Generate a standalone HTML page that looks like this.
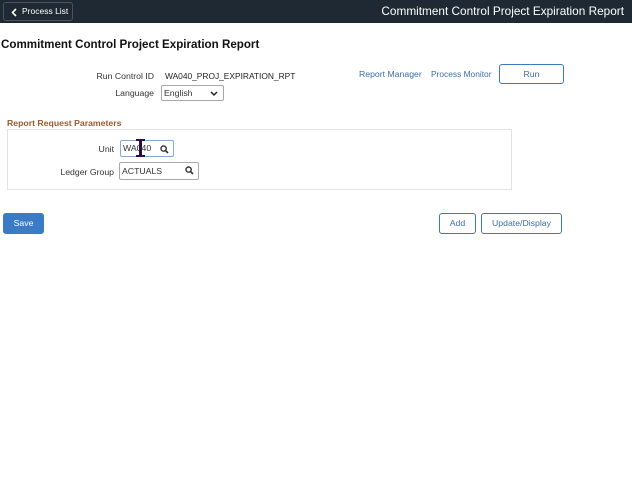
<!DOCTYPE html>
<html><head><style>
*{margin:0;padding:0;box-sizing:border-box}
body{width:632px;height:488px;background:#fff;font-family:"Liberation Sans",Arial,sans-serif;position:relative;overflow:hidden;color:#333}
.hdr{position:absolute;left:0;top:0;width:632px;height:23px;background:#1f2933}
.pl{position:absolute;left:3px;top:2px;width:70px;height:19px;border:1px solid #4a5560;border-radius:3px;color:#fff;font-size:8.5px;line-height:17px;padding-left:18px}
.pl svg{position:absolute;left:7px;top:5px}
.ht{position:absolute;right:8px;top:4px;color:#fff;font-size:11.8px}
.a{position:absolute;white-space:nowrap}
h1{position:absolute;left:1px;top:38px;font-size:11.6px;font-weight:bold;color:#111}
.lbl{font-size:8.7px;color:#333;text-align:right}
.lnk{font-size:8.7px;color:#3d6ea8}
.btn{position:absolute;border:1px solid #3c78c0;border-radius:3px;color:#3c6ea6;font-size:8.7px;text-align:center;background:#fff}
.inp{position:absolute;border:1px solid #a8a8a8;border-radius:2px;font-size:8.7px;padding-left:2px;background:#fff}
.inp svg{position:absolute;right:4px;top:4px}
</style></head><body>
<div class="hdr">
 <div class="pl"><svg width="6" height="9" viewBox="0 0 6 9"><path d="M5 1 L1.5 4.5 L5 8" stroke="#fff" stroke-width="1.6" fill="none"/></svg>Process List</div>
 <div class="ht">Commitment Control Project Expiration Report</div>
</div>
<h1>Commitment Control Project Expiration Report</h1>
<div class="a lbl" style="left:90px;top:71px;width:64px">Run Control ID</div>
<div class="a" style="left:165px;top:71px;font-size:8.4px;color:#222">WA040_PROJ_EXPIRATION_RPT</div>
<div class="a lbl" style="left:90px;top:88px;width:64px">Language</div>
<div class="inp" style="left:161px;top:85px;width:63px;height:16px;line-height:14px">English
 <svg width="8" height="6" viewBox="0 0 8 6" style="top:5px;right:5px"><path d="M1 1 L4 4 L7 1" stroke="#222" stroke-width="1.5" fill="none"/></svg></div>
<div class="a lnk" style="left:359px;top:69px">Report Manager</div>
<div class="a lnk" style="left:431px;top:69px;font-size:8.4px">Process Monitor</div>
<div class="btn" style="left:499px;top:64px;width:65px;height:20px;line-height:18px">Run</div>
<div class="a" style="left:7px;top:118px;font-size:8.7px;font-weight:bold;color:#9a5a2e">Report Request Parameters</div>
<div class="a" style="left:7px;top:129px;width:505px;height:61px;border:1px solid #e2e2e2"></div>
<div class="a lbl" style="left:60px;top:144px;width:54px">Unit</div>
<div class="inp" style="left:120px;top:140px;width:54px;height:17px;line-height:15px;border-color:#8aa8d0">WA040
 <svg width="9" height="9" viewBox="0 0 9 9"><circle cx="3.6" cy="3.6" r="2.6" stroke="#333" stroke-width="1.4" fill="none"/><path d="M5.5 5.5L8 8" stroke="#333" stroke-width="1.6"/></svg></div>
<div class="a" style="left:139px;top:139px;width:3px;height:18px;background:#2a1040"></div>
<div class="a" style="left:136px;top:139px;width:9px;height:2px;background:#2a1040"></div>
<div class="a" style="left:136px;top:155px;width:9px;height:2px;background:#2a1040"></div>
<div class="a lbl" style="left:40px;top:167px;width:74px">Ledger Group</div>
<div class="inp" style="left:119px;top:162px;width:80px;height:18px;line-height:17px">ACTUALS
 <svg width="9" height="9" viewBox="0 0 9 9" style="top:3px"><circle cx="3.6" cy="3.6" r="2.6" stroke="#333" stroke-width="1.4" fill="none"/><path d="M5.5 5.5L8 8" stroke="#333" stroke-width="1.6"/></svg></div>
<div class="btn" style="left:3px;top:213px;width:41px;height:21px;line-height:19px;background:#3a7bc8;color:#fff;border-color:#3a7bc8">Save</div>
<div class="btn" style="left:439px;top:213px;width:37px;height:21px;line-height:19px">Add</div>
<div class="btn" style="left:481px;top:213px;width:81px;height:21px;line-height:19px">Update/Display</div>
</body></html>
